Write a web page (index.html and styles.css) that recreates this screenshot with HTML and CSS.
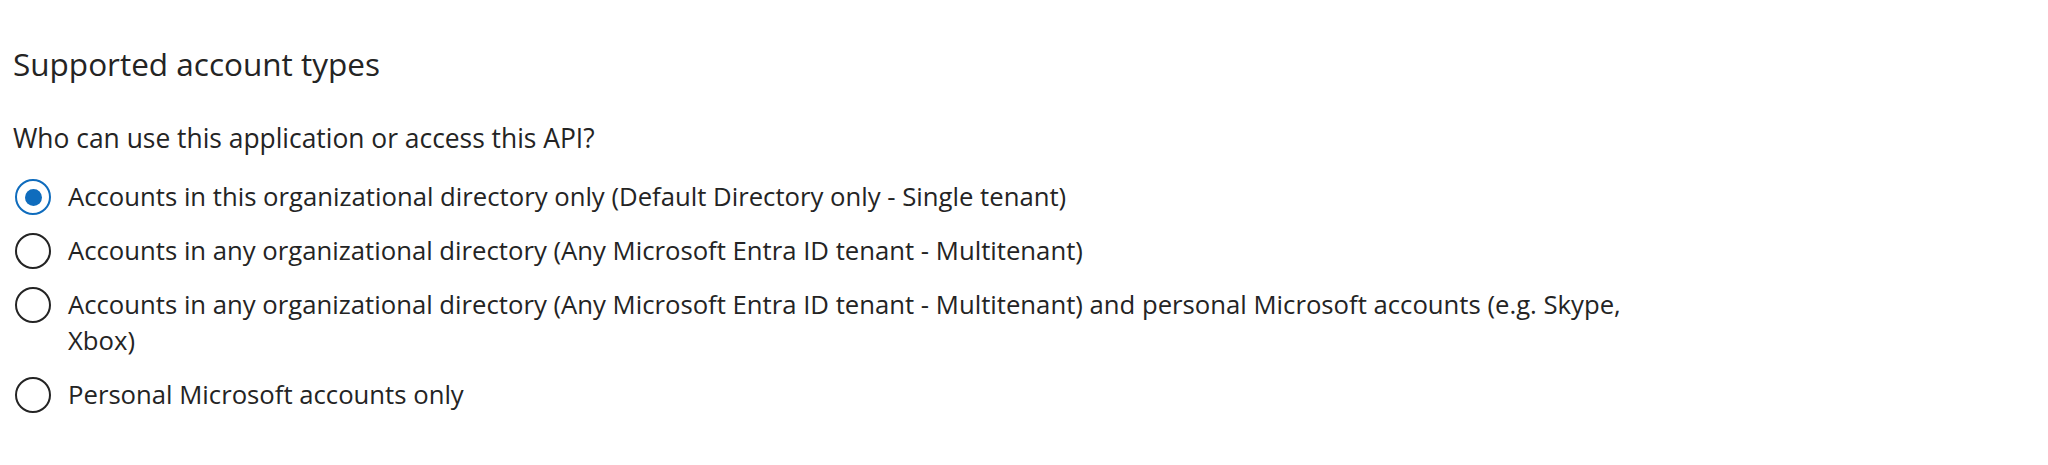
FILE: index.html
```html
<!DOCTYPE html>
<html lang="en">
<head>
<meta charset="utf-8">
<title>Supported account types</title>
<link rel="stylesheet" href="styles.css">
</head>
<body>
<section class="field">
  <h2 class="title">Supported account types</h2>
  <p class="question">Who can use this application or access this API?</p>
  <div class="radio-group" role="radiogroup">
    <label class="option">
      <span class="radio checked"><span class="dot"></span></span>
      <span class="label">Accounts in this organizational directory only (Default Directory only - Single tenant)</span>
    </label>
    <label class="option">
      <span class="radio"></span>
      <span class="label">Accounts in any organizational directory (Any Microsoft Entra ID tenant - Multitenant)</span>
    </label>
    <label class="option">
      <span class="radio"></span>
      <span class="label">Accounts in any organizational directory (Any Microsoft Entra ID tenant - Multitenant) and personal Microsoft accounts (e.g. Skype, Xbox)</span>
    </label>
    <label class="option">
      <span class="radio"></span>
      <span class="label">Personal Microsoft accounts only</span>
    </label>
  </div>
</section>
</body>
</html>
```
FILE: styles.css
```css
html, body {
  margin: 0;
  padding: 0;
  background: #ffffff;
}

body {
  font-family: "Open Sans", "Noto Sans", "Liberation Sans", sans-serif;
  color: #242424;
}

.field {
  padding: 44px 0 0 13px;
}

.title {
  margin: 0;
  font-size: 31.5px;
  line-height: 40px;
  font-weight: 400;
}

.question {
  margin: 36px 0 0;
  font-size: 26.4px;
  line-height: 36px;
}

.radio-group {
  margin-top: 23px;
  display: flex;
  flex-direction: column;
  gap: 18px;
}

.option {
  display: flex;
  align-items: flex-start;
  gap: 17px;
  font-size: 25.7px;
  line-height: 36px;
}

.radio {
  flex: none;
  box-sizing: border-box;
  width: 36px;
  height: 36px;
  margin-left: 2px;
  border: 2px solid #242424;
  border-radius: 50%;
  display: flex;
  align-items: center;
  justify-content: center;
}

.radio.checked {
  border-color: #0f6cbd;
}

.dot {
  width: 17px;
  height: 17px;
  border-radius: 50%;
  background: #0f6cbd;
}

.label {
  max-width: 1590px;
}
```
